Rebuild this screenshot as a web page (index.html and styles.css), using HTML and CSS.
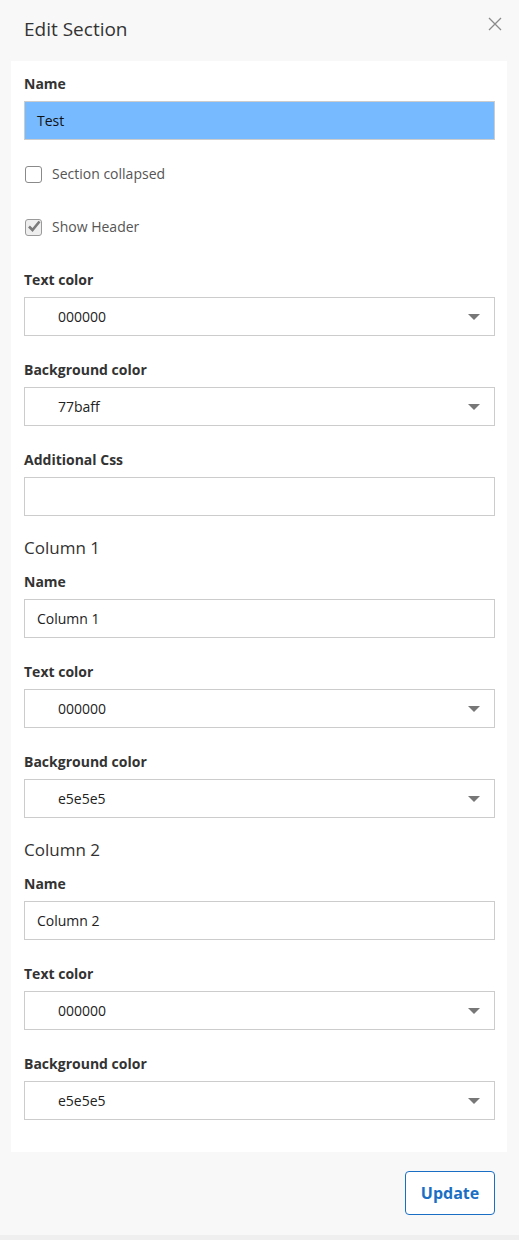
FILE: index.html
```html
<!DOCTYPE html>
<html>
<head>
  <meta charset="UTF-8">
  <title>Edit Section</title>
  <meta name="viewport" content="width=device-width, initial-scale=1.0">
  <link rel="stylesheet" href="styles.css">
</head>
<body>

  <div class="modal">
    <div class="modal-header">
      <span class="modal-title">Edit Section</span>
      <span class="close" title="Close">
        <svg width="14" height="14" viewBox="0 0 14 14"><path d="M1 1 L13 13 M13 1 L1 13" stroke="#8a8a8a" stroke-width="1.3" fill="none"/></svg>
      </span>
    </div>

    <div class="modal-body">
      <div class="field">
        <label>Name</label>
        <div class="input selected">Test</div>
      </div>

      <div class="check-row">
        <span class="box"></span>
        <span>Section collapsed</span>
      </div>

      <div class="check-row disabled">
        <span class="box checked">
          <svg width="17" height="17" viewBox="0 0 17 17"><path d="M4 8.5 L7.5 12 L14.5 3.5" stroke="#7a7a7a" stroke-width="2.6" fill="none"/></svg>
        </span>
        <span>Show Header</span>
      </div>

      <div class="field">
        <label>Text color</label>
        <div class="select">000000<span class="arrow"></span></div>
      </div>

      <div class="field">
        <label>Background color</label>
        <div class="select">77baff<span class="arrow"></span></div>
      </div>

      <div class="field">
        <label>Additional Css</label>
        <div class="input"></div>
      </div>

      <h4>Column 1</h4>
      <div class="field">
        <label>Name</label>
        <div class="input">Column 1</div>
      </div>
      <div class="field">
        <label>Text color</label>
        <div class="select">000000<span class="arrow"></span></div>
      </div>
      <div class="field">
        <label>Background color</label>
        <div class="select">e5e5e5<span class="arrow"></span></div>
      </div>

      <h4>Column 2</h4>
      <div class="field">
        <label>Name</label>
        <div class="input">Column 2</div>
      </div>
      <div class="field">
        <label>Text color</label>
        <div class="select">000000<span class="arrow"></span></div>
      </div>
      <div class="field">
        <label>Background color</label>
        <div class="select">e5e5e5<span class="arrow"></span></div>
      </div>
    </div>

    <div class="modal-footer">
      <button>Update</button>
    </div>
  </div>

</body>
</html>
```

FILE: styles.css
```css
body {
  font-family: 'Open Sans', 'Noto Sans', sans-serif;
  background: #efefef;
  margin: 0;
  padding: 0;
  color: #333;
  font-size: 14px;
}
.modal {
  background: #f8f8f8;
  height: 1235px;
  display: flex;
  flex-direction: column;
}
.modal-header {
  height: 61px;
  display: flex;
  justify-content: space-between;
  align-items: flex-start;
  padding: 0 17px 0 24px;
}
.modal-title {
  font-size: 19px;
  line-height: 24px;
  margin-top: 17px;
  color: #333;
}
.close {
  margin-top: 16px;
  cursor: pointer;
}
.modal-body {
  background: #fff;
  margin: 0 12px 0 11px;
  padding: 13px 12px 8px 13px;
}
.field {
  margin-bottom: 24px;
}
.field label {
  display: block;
  font-weight: bold;
  font-size: 14px;
  line-height: 20px;
  margin-bottom: 7px;
}
.input,
.select {
  height: 37px;
  border: 1px solid #ccc;
  display: flex;
  align-items: center;
  padding-left: 12px;
  font-size: 14px;
  color: #222;
  position: relative;
}
.input.selected {
  background: #77baff;
  color: #111;
}
.select {
  padding-left: 33px;
}
.arrow {
  position: absolute;
  right: 14px;
  top: 16px;
  width: 0;
  height: 0;
  border-left: 6px solid transparent;
  border-right: 6px solid transparent;
  border-top: 6px solid #777;
}
.check-row {
  display: flex;
  align-items: center;
  gap: 10px;
  line-height: 20px;
  margin-bottom: 33px;
  color: #555;
}
.box {
  width: 15px;
  height: 15px;
  border: 1px solid #8a8a8a;
  border-radius: 3px;
  margin-left: 1px;
  position: relative;
}
.box.checked {
  border-color: #9a9a9a;
  background: #eee;
}
.box.checked svg {
  position: absolute;
  left: -1px;
  top: -2px;
}
h4 {
  font-weight: normal;
  font-size: 17px;
  line-height: 24px;
  margin: -4px 0 12px;
}
.modal-footer {
  display: flex;
  justify-content: flex-end;
  padding: 19px 24px 0 0;
}
button {
  width: 90px;
  height: 44px;
  border: 1px solid #1a6fc4;
  border-radius: 4px;
  background: #fff;
  color: #1a6fc4;
  font-family: inherit;
  font-size: 16px;
  font-weight: bold;
  cursor: pointer;
}
button:hover {
  background: #f0f6fd;
}
```
